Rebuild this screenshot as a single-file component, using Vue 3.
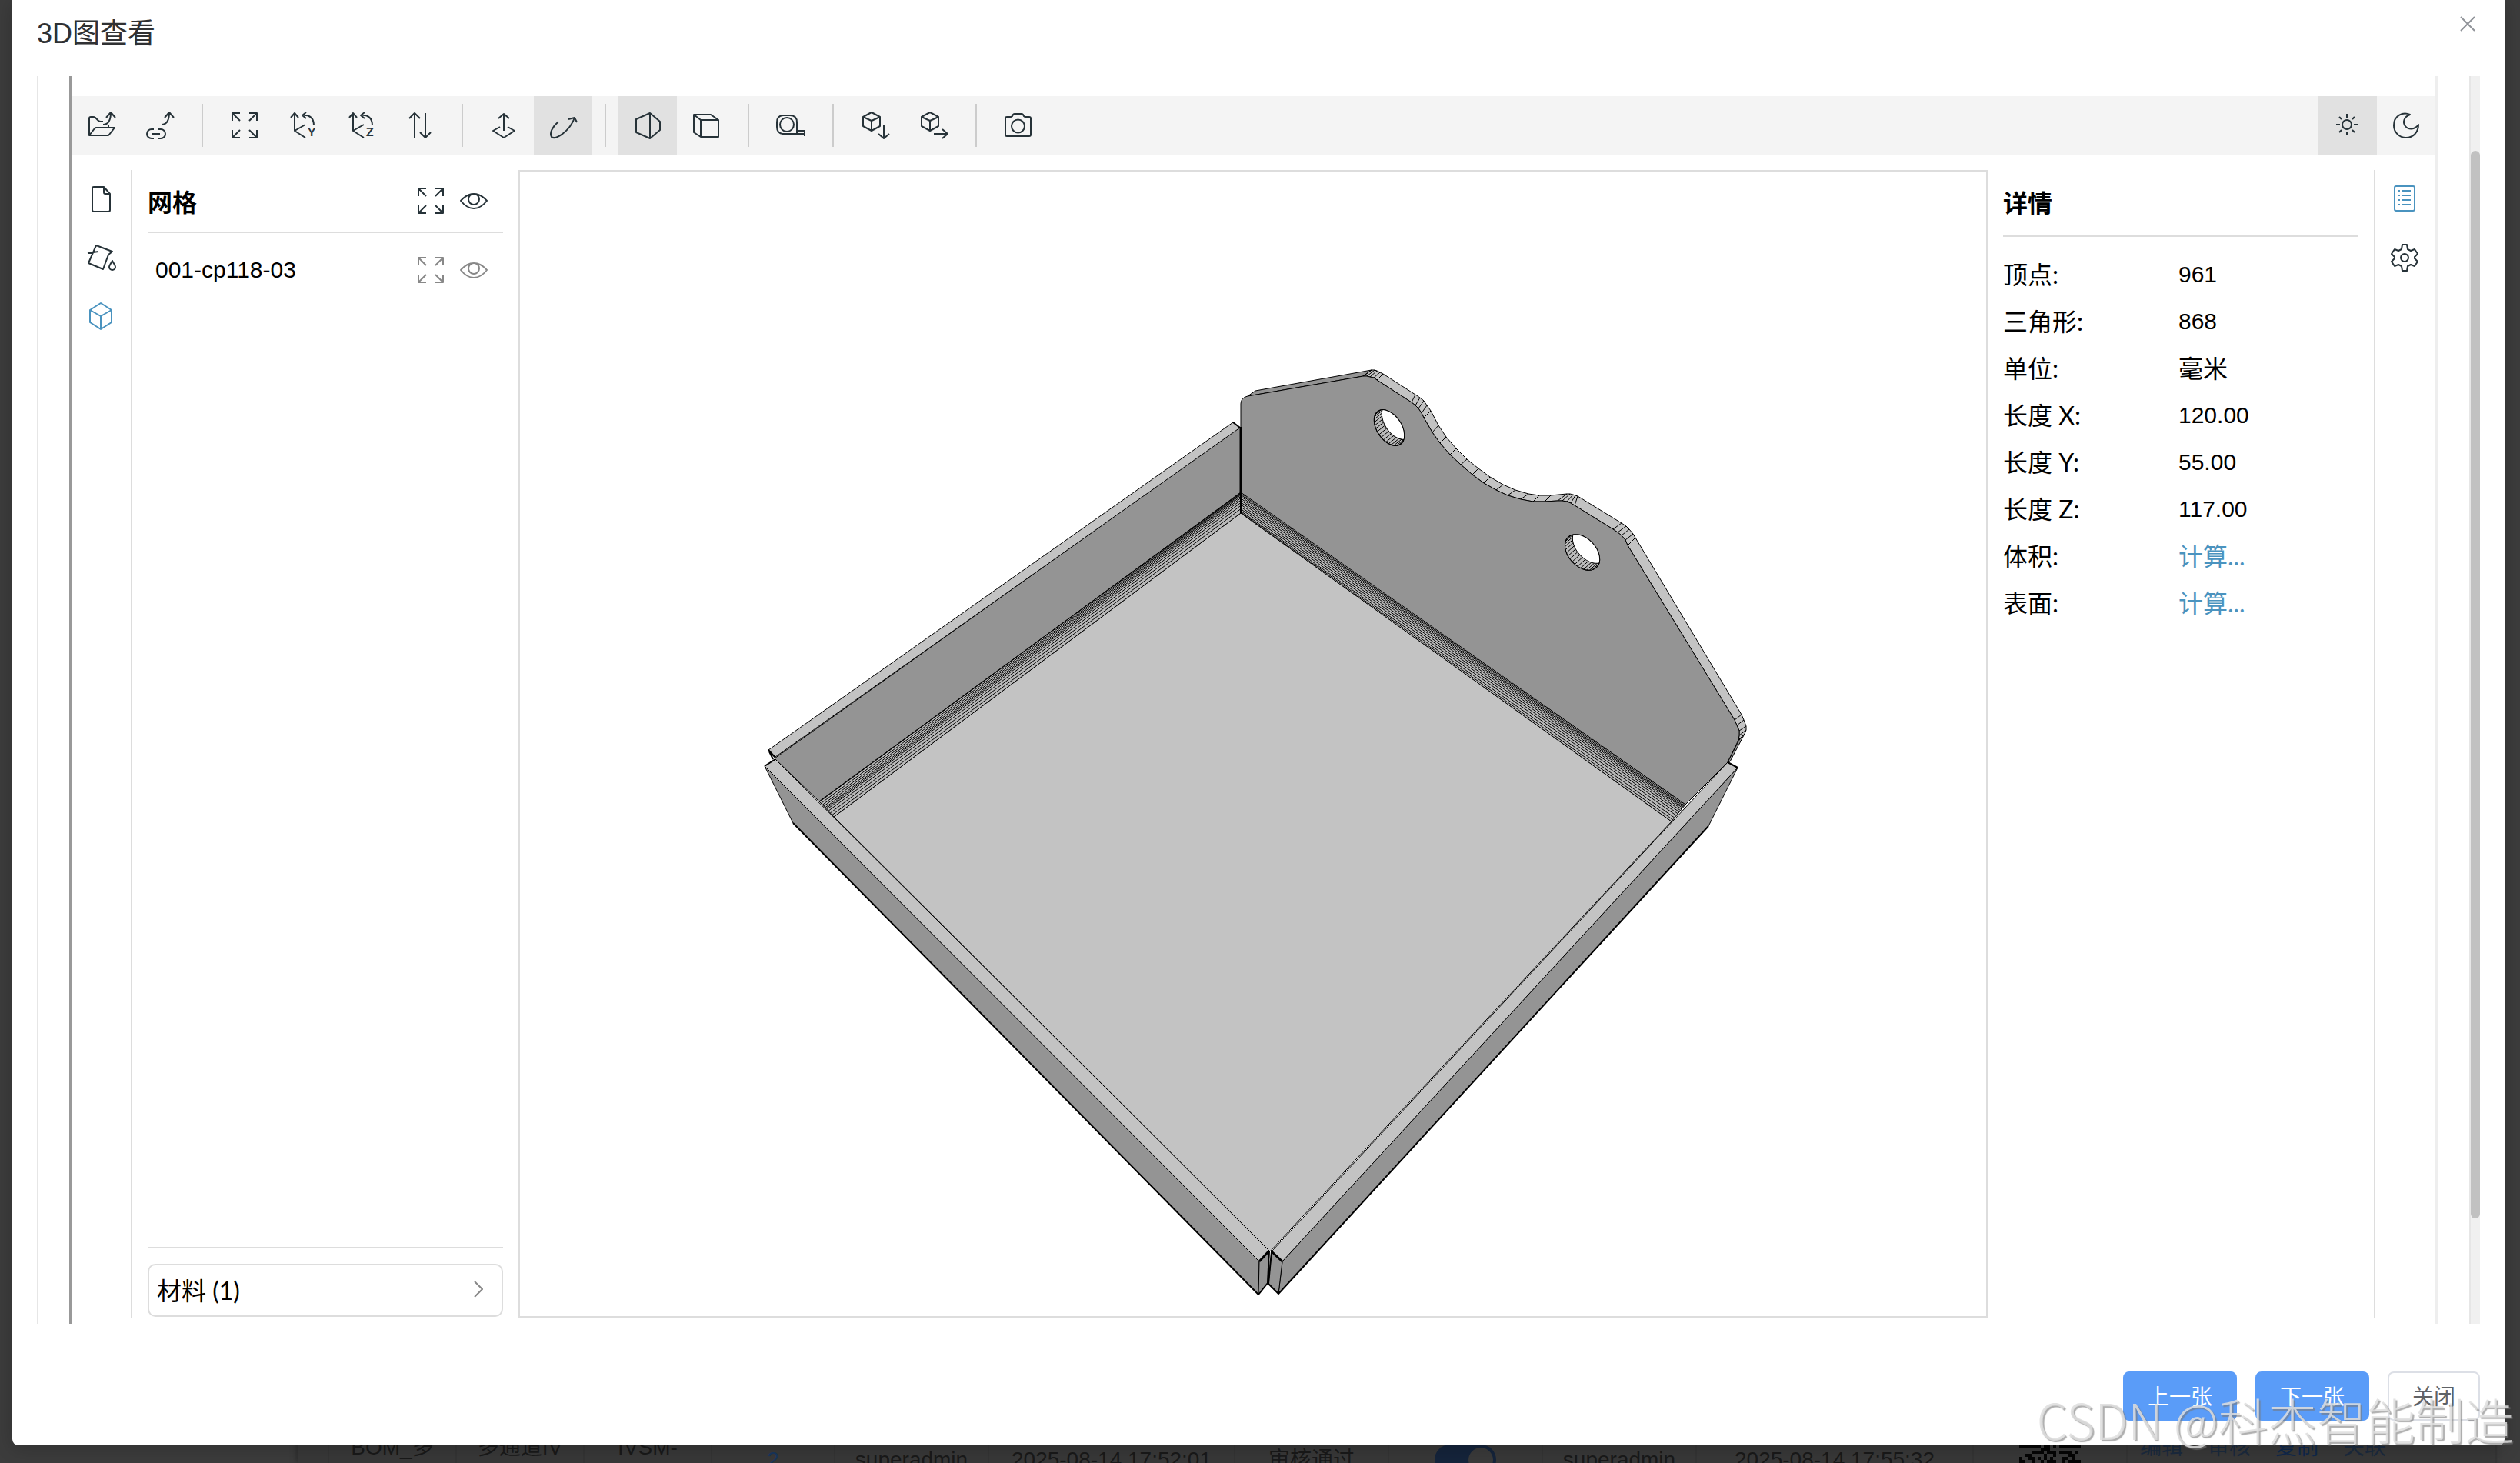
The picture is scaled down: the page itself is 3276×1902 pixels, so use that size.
<template>
  <div class="page">
    <!-- list page behind the dialog -->
    <div class="list-peek">
      <table class="list-table">
        <colgroup>
          <col v-for="(w, i) in listCols" :key="i" :width="w" />
          <col />
        </colgroup>
        <tbody>
          <tr>
            <td></td>
            <td>BOM_多</td>
            <td>多通道IV</td>
            <td>IVSM-</td>
            <td class="single blue">2</td>
            <td class="single">superadmin</td>
            <td class="single">2025-08-14 17:52:01</td>
            <td class="single">审核通过</td>
            <td class="switch-cell"><span class="switch"><span class="switch-knob"></span></span></td>
            <td class="single">superadmin</td>
            <td class="single">2025-08-14 17:55:32</td>
            <td>
              <svg class="qr" viewBox="0 0 20 6">
                <path :d="qrPath" />
              </svg>
            </td>
            <td class="actions">
              <a href="#">编辑</a>
              <a href="#">审核</a>
              <a href="#" class="strong">复制</a>
              <a href="#">关联</a>
            </td>
          </tr>
        </tbody>
      </table>
    </div>

    <div class="dialog" role="dialog" aria-labelledby="dialog-title">
      <header class="dialog-header">
        <h1 id="dialog-title">3D图查看</h1>
        <button type="button" class="close-btn" aria-label="关闭">
          <svg viewBox="0 0 20 20"><path d="M1 1l18 18M19 1L1 19" /></svg>
        </button>
      </header>

      <div class="dialog-body">
        <div class="viewer">
          <div class="toolbar">
            <template v-for="(tool, i) in tools" :key="i">
              <span v-if="tool === '|'" class="separator"></span>
              <span v-else-if="tool === '-'" class="spacer"></span>
              <button v-else type="button" class="tool" :class="{ selected: activeTools.includes(tool) }">
                <svg class="icon" viewBox="0 0 36 36">
                  <path :d="icons[tool]" />
                  <text v-if="tool === 'upY'" x="24" y="32">Y</text>
                  <text v-if="tool === 'upZ'" x="24" y="32">Z</text>
                </svg>
              </button>
            </template>
          </div>

          <div class="viewer-main">
            <nav class="side-tabs">
              <button
                v-for="tab in leftTabs"
                :key="tab"
                type="button"
                class="tool"
                :class="{ active: tab === 'meshes' }"
              >
                <svg class="icon" viewBox="0 0 36 36"><path :d="icons[tab]" /></svg>
              </button>
            </nav>

            <section class="panel mesh-panel">
              <div class="panel-title">
                <h2>网格</h2>
                <button type="button" class="mini"><svg class="icon" viewBox="0 0 36 36"><path :d="icons.fit" /></svg></button>
                <button type="button" class="mini"><svg class="icon" viewBox="0 0 36 36"><path :d="icons.eye" /></svg></button>
              </div>
              <div class="mesh-item">
                <span class="mesh-name">001-cp118-03</span>
                <button type="button" class="mini"><svg class="icon" viewBox="0 0 36 36"><path :d="icons.fit" /></svg></button>
                <button type="button" class="mini"><svg class="icon" viewBox="0 0 36 36"><path :d="icons.eye" /></svg></button>
              </div>
              <div class="material-area">
                <button type="button" class="material-btn">
                  <span>材料 (1)</span>
                  <svg viewBox="0 0 12 22"><path d="M1 1l10 10L1 21" /></svg>
                </button>
              </div>
            </section>

            <div class="canvas">
              <svg class="model" viewBox="676 223 1906 1488">
                <!-- floor -->
                <path class="light" d="M1613 667L2173 1068L1651 1627L1084 1062z" />
                <!-- back left wall -->
                <path class="dark" d="M1612 555V641L1065 1042L1007 986z" />
                <path class="light" d="M1603 549L1612 556L1008 984L999 975z" />
                <path class="bend" d="M1613 640V667L1084 1062L1065 1042z" />
                <path class="edge" :d="leftBend" />
                <path class="edge bold" d="M999 975L1008 985M1603 549L1612 556M1000 977L1005 987" />
                <!-- back plate -->
                <path class="light" :d="plateSide" />
                <path class="dark" d="M1622 515L1632 508L1783 481L1772 489z" />
                <path class="dark" :d="plateFace" />
                <path class="edge" :d="plateTicks" />
                <path class="dark" d="M2261 962L2268 954L2249 990L2246 991z" />
                <path class="bend" d="M1613 640V667L2173 1068L2191 1046z" />
                <path class="edge" :d="rightBend" />
                <path class="edge bold" d="M1613 555V667" />
                <g v-for="hole in holes" :key="hole.id">
                  <clipPath :id="hole.id">
                    <ellipse :rx="hole.rx" :ry="hole.ry" :transform="hole.place" />
                  </clipPath>
                  <ellipse class="rim" :rx="hole.rx" :ry="hole.ry" :transform="hole.place" />
                  <g :clip-path="`url(#${hole.id})`">
                    <path class="edge" :d="hole.ticks" />
                    <ellipse class="through" :rx="hole.rx" :ry="hole.ry" :transform="hole.back" />
                  </g>
                  <ellipse class="outline" :rx="hole.rx" :ry="hole.ry" :transform="hole.place" />
                </g>
                <!-- front left wall -->
                <path class="dark" d="M994 996L1031 1070L1636 1683L1637 1640z" />
                <path class="light" d="M994 996L1008 987L1650 1626L1637 1640z" />
                <path class="dark" d="M1637 1640L1650 1626L1648 1668L1636 1683z" />
                <!-- front right wall -->
                <path class="dark" d="M2259 998L2221 1074L1662 1682L1667 1640z" />
                <path class="light" d="M2246 991L2259 998L1667 1640L1653 1627z" />
                <path class="dark" d="M1653 1627L1667 1640L1662 1682L1649 1669z" />
                <path class="edge bold" d="M994 996L1008 987M2246 991L2259 998M1031 1070L1636 1683L1648 1668L1650 1626M2221 1074L1662 1682L1649 1669L1653 1627" />
                <path class="edge heavy" d="M1637 1640L1650 1626M1653 1627L1667 1640" />
              </svg>
            </div>

            <section class="panel detail-panel">
              <div class="panel-title tall">
                <h2>详情</h2>
              </div>
              <table class="details">
                <tbody>
                  <tr v-for="row in details" :key="row.label">
                    <th scope="row">{{ row.label }}</th>
                    <td :class="{ number: row.number }">
                      <a v-if="row.link" href="#">{{ row.value }}</a>
                      <template v-else>{{ row.value }}</template>
                    </td>
                  </tr>
                </tbody>
              </table>
            </section>

            <nav class="side-tabs right">
              <button type="button" class="tool active"><svg class="icon" viewBox="0 0 36 36"><path :d="icons.details" /></svg></button>
              <button type="button" class="tool"><svg class="icon" viewBox="0 0 36 36"><path :d="icons.settings" /></svg></button>
            </nav>
          </div>
        </div>
        <div class="scrollbar"><div class="thumb"></div></div>
      </div>

      <footer class="dialog-footer">
        <button type="button" class="btn primary">上一张</button>
        <button type="button" class="btn primary">下一张</button>
        <button type="button" class="btn">关闭</button>
      </footer>
    </div>

    <div class="watermark">CSDN @科杰智能制造</div>
  </div>
</template>

<script setup>
const listCols = [40, 166, 166, 166, 160, 200, 320, 200, 200, 200, 360, 200];

const tools = [
  'open', 'link', '|', 'fit', 'upY', 'upZ', 'flip', '|', 'fixedUp', 'orbit', '|',
  'perspective', 'ortho', '|', 'measure', '|', 'download', 'share', '|', 'camera', '-', 'sun', 'moon',
];
const activeTools = ['orbit', 'perspective', 'sun'];
const leftTabs = ['file', 'materials', 'meshes'];

const axis = 'M7 25V2M2 8l5-6 5 6M21 17L7 25l14 9M17 5c9-1 15 3 15 13M22 1l-5 4 5 4';
const smallCube = 'M13 1L2 7v12l11 6 11-6V7zM2 7l11 5 11-5M13 12v13';

const icons = {
  open: 'M2 31V9q0-2 2-2h3q2 0 3 1l4 4q1 1 3 1h3M2 31l7-9q1-1 2-1h24l-7 9q-1 1-2 1zM27 21v-3M20 17c7 0 10-6 10-16M24 8l6-7 6 7',
  link: 'M20 17c7 0 10-6 10-16M24 8l6-7 6 7M10 23H7a6 6 0 0 0 0 12h3M16 23h3a6 6 0 0 1 0 12h-3M8 29h10',
  fit: 'M2 12V2h10M2 2l10 10M24 2h10v10M34 2L24 12M2 24v10h10M2 34l10-10M24 34h10V24M34 34L24 24',
  upY: axis,
  upZ: axis,
  flip: 'M11 34V2M4 9l7-7 7 7M25 2v32M18 27l7 7 7-7',
  fixedUp: 'M17 25V3M10 9l7-6 7 6M12 20l-9 5 14 9 14-9-9-5',
  orbit: 'M12 13C4 20 0 28 3 33c5 5 24-8 30-25M25 10l8-2 3 6',
  perspective: 'M3 10l18-8 13 11v11L21 35 3 27zM21 2v33',
  ortho: 'M11 11h23v22H11zM11 11L2 4v23l9 6M2 4h22l10 7',
  measure: 'M26 29H9q-9 0-9-9v-6q0-9 9-9h8q9 0 9 9v11h10v7M26 25v4h10M4 17a9 9 0 1 0 18 0a9 9 0 1 0-18 0',
  download: smallCube + 'M29 18v17M22 29l7 6 7-6',
  share: smallCube + 'M18 29h18M29 23l7 6-7 6',
  camera: 'M3 7h5q1 0 2-1l1-2q1-1 2-1h9q1 0 2 1l1 2q1 1 2 1h5q2 0 2 2v21q0 2-2 2H3q-2 0-2-2V9q0-2 2-2zM9 19a8 8 0 1 0 17 0a8 8 0 1 0-17 0',
  sun: 'M11 17a6 6 0 1 0 12 0a6 6 0 1 0-12 0M17 3v5M17 26v5M3 17h5M26 17h5M7 7l3 3M24 24l3 3M7 27l3-3M24 10l3-3',
  moon: 'M23 4C14 0 2 5 2 18c0 9 7 16 16 16s16-7 16-17c-5 7-13 7-17 2S15 7 23 4z',
  file: 'M8 2h13l8 9v21q0 2-2 2H8q-2 0-2-2V4q0-2 2-2zM21 2v7q0 2 2 2h6',
  materials: 'M11 2l21 8-5 4-7 19-19-8zM0 12l14-2M32 22c2 4 4 6 4 8a4 4 0 0 1-8 0c0-2 2-4 4-8z',
  meshes: 'M17 1L3 10v16l14 9 14-9V10zM3 10l14 8 14-8M17 18v17',
  eye: 'M1 18q8-9 17-9t17 9q-8 10-17 10T1 18zM11 16a7 7 0 1 0 14 0a7 7 0 1 0-14 0',
  details: 'M7 1h22q2 0 2 2v28q0 2-2 2H7q-2 0-2-2V3q0-2 2-2zM10 7h2M15 7h11M10 13h2M15 13h11M10 19h2M15 19h11M10 25h2M15 25h11',
  settings: 'M15 1h6l1 6 4 2 5-2 4 6-4 4v2l4 4-4 6-5-2-4 2-1 6h-6l-1-6-4-2-5 2-4-6 4-4v-2l-4-4 4-6 5 2 4-2zM13 18a5 5 0 1 0 10 0a5 5 0 1 0-10 0',
};

const details = [
  { label: '顶点:', value: '961', number: true },
  { label: '三角形:', value: '868', number: true },
  { label: '单位:', value: '毫米' },
  { label: '长度 X:', value: '120.00', number: true },
  { label: '长度 Y:', value: '55.00', number: true },
  { label: '长度 Z:', value: '117.00', number: true },
  { label: '体积:', value: '计算...', link: true },
  { label: '表面:', value: '计算...', link: true },
];

// contour of the back plate: front edge and the matching points on the rear edge
const front = [
  [1772, 489], [1777, 489], [1781, 490], [1786, 491], [1790, 494], [1835, 523], [1840, 527], [1844, 531],
  [1848, 537], [1851, 543], [1862, 562], [1872, 576], [1885, 591], [1899, 604], [1914, 617], [1929, 628],
  [1945, 637], [1960, 644], [1977, 649], [1993, 652], [2008, 652], [2025, 651], [2031, 651], [2037, 652],
  [2042, 654], [2047, 657], [2097, 688], [2103, 692], [2108, 696], [2113, 702], [2116, 709],
  [2255, 936], [2258, 943], [2261, 950], [2261, 956], [2260, 962],
];
const rear = [
  [1783, 481], [1787, 481], [1790, 482], [1794, 484], [1798, 486], [1840, 513], [1846, 517], [1851, 521],
  [1855, 527], [1860, 534], [1870, 553], [1880, 568], [1893, 583], [1907, 597], [1922, 609], [1937, 620],
  [1954, 630], [1970, 637], [1987, 642], [2001, 644], [2016, 644], [2037, 642], [2041, 642], [2045, 643],
  [2048, 644], [2051, 645], [2108, 680], [2114, 684], [2118, 688], [2123, 694], [2126, 699],
  [2264, 929], [2267, 936], [2270, 944], [2270, 949], [2268, 954],
];
const join = (pts) => pts.map((p) => p.join(' ')).join('L');
const plateSide = `M${join(front)}L${join([...rear].reverse())}z`;
const plateFace = `M1613 641V525Q1613 517 1622 515L${join(front)}L2246 991L2191 1046z`;
const plateTicks = front.map((p, i) => `M${p.join(' ')}L${rear[i].join(' ')}`).join('');

// bend lines fan out between two edges of a fold
function fan(a0, a1, b0, b1, from, to) {
  return from
    .map((t, i) => {
      const s = to[i];
      const x0 = a0[0] + (a1[0] - a0[0]) * t;
      const y0 = a0[1] + (a1[1] - a0[1]) * t;
      const x1 = b0[0] + (b1[0] - b0[0]) * s;
      const y1 = b0[1] + (b1[1] - b0[1]) * s;
      return `M${x0} ${y0}L${x1} ${y1}`;
    })
    .join('');
}
const leftBend = fan(
  [1613, 640], [1613, 667], [1065, 1042], [1084, 1062],
  [0.02, 0.05, 0.09, 0.14, 0.2, 0.28, 0.38, 0.5, 0.64, 0.8],
  [0.02, 0.12, 0.22, 0.31, 0.4, 0.46, 0.52, 0.62, 0.75, 0.88]
);
const rightBend = fan(
  [1613, 640], [1613, 667], [2191, 1046], [2173, 1068],
  [0.06, 0.12, 0.2, 0.29, 0.38, 0.48, 0.59, 0.7, 0.8, 0.9, 0.96],
  [0.05, 0.1, 0.15, 0.2, 0.27, 0.35, 0.44, 0.54, 0.65, 0.78, 0.9]
);

function makeHole(id, cx, cy, rx, ry, angle, dx, dy) {
  const rad = (angle * Math.PI) / 180;
  let ticks = '';
  for (let k = 0; k < 36; k++) {
    const a = (k * Math.PI) / 18;
    const x = cx + rx * Math.cos(a) * Math.cos(rad) - ry * Math.sin(a) * Math.sin(rad);
    const y = cy + rx * Math.cos(a) * Math.sin(rad) + ry * Math.sin(a) * Math.cos(rad);
    ticks += `M${x} ${y}l${dx} ${dy}`;
  }
  return {
    id, rx, ry, ticks,
    place: `translate(${cx} ${cy}) rotate(${angle})`,
    back: `translate(${cx + dx} ${cy + dy}) rotate(${angle})`,
  };
}
const holes = [
  makeHole('hole-a', 1806, 556, 26, 16, 56, 10, -8),
  makeHole('hole-b', 2057, 718, 27, 18, 47, 10, -9),
];

const qrRows = [
  '11111110110101111111',
  '00000001110000000000',
  '00001111011101111010',
  '00110000100100001100',
  '10011010101000110100',
  '11001001011100101111',
];
const qrPath = qrRows
  .map((row, y) => [...row].map((c, x) => (c === '1' ? `M${x} ${y}h1v1h-1z` : '')).join(''))
  .join('');
</script>

<style>
body {
  margin: 0;
  background: #3c3c3c;
}
</style>

<style scoped>
.page {
  position: relative;
  height: 100vh;
  overflow: hidden;
  display: flex;
  flex-direction: column;
  justify-content: flex-end;
  background: #3c3c3c;
  font-family: "Liberation Sans", "Noto Sans CJK SC", sans-serif;
}

button {
  font: inherit;
  border: 0;
  padding: 0;
  background: none;
  cursor: pointer;
}

a {
  text-decoration: none;
}

/* list behind the dialog */
.list-peek {
  height: 40px;
  margin: 0 30px 0 387px;
  overflow: hidden;
  background: #383838;
  box-shadow: -2px 0 6px #2c2c2c;
}

.list-table {
  width: 100%;
  table-layout: fixed;
  border-collapse: collapse;
  font-size: 28px;
  line-height: 40px;
  color: #191919;
}

.list-table td {
  padding: 0;
  box-sizing: border-box;
  border-right: 2px solid #343434;
  text-align: center;
  vertical-align: top;
  white-space: nowrap;
}

.list-table td.single {
  padding-top: 16px;
}

.list-table td.blue {
  color: #19365c;
}

.list-table td.switch-cell {
  padding-top: 16px;
}

.switch {
  display: flex;
  justify-content: flex-end;
  width: 80px;
  height: 40px;
  margin: 0 auto;
  padding: 4px;
  box-sizing: border-box;
  border-radius: 20px;
  background: #15243b;
}

.switch-knob {
  width: 32px;
  height: 32px;
  border-radius: 50%;
  background: #3a3a3a;
}

.qr {
  display: block;
  width: 80px;
  height: 24px;
  margin: 16px auto 0;
  fill: #050505;
}

.list-table td.actions {
  text-align: left;
  padding-left: 16px;
}

.actions a {
  margin-right: 32px;
  color: #1b2a3e;
}

.actions a.strong {
  color: #10284b;
}

/* dialog */
.dialog {
  position: absolute;
  inset: 0 20px 23px 16px;
  display: flex;
  flex-direction: column;
  background: #fff;
  border-radius: 0 0 8px 8px;
  box-shadow: 0 4px 24px rgba(0, 0, 0, 0.2);
}

.dialog-header {
  flex: none;
  display: flex;
  justify-content: space-between;
  height: 99px;
  padding: 0 38px 0 32px;
  box-sizing: border-box;
}

.dialog-header h1 {
  margin: 0;
  font-size: 36px;
  font-weight: 400;
  line-height: 88px;
  color: #303133;
}

.close-btn {
  height: 62px;
}

.close-btn svg {
  display: block;
  width: 20px;
  height: 20px;
  fill: none;
  stroke: #909399;
  stroke-width: 2;
}

.dialog-body {
  flex: 1;
  min-height: 0;
  display: flex;
  margin: 0 32px;
  padding-left: 40px;
  border-left: 2px solid #e6e6e6;
}

.viewer {
  flex: 1;
  min-width: 0;
  display: flex;
  flex-direction: column;
  gap: 20px;
  padding: 26px 0 8px;
  border-left: 4px solid #999;
  border-right: 4px solid #eee;
  font-family: Lato, "Noto Sans CJK SC", sans-serif;
  font-size: 32px;
  color: #000;
}

.scrollbar {
  width: 12px;
  margin-left: 40px;
  border-left: 2px solid #e6e6e6;
  padding-top: 97px;
  background: #f0f0f0;
}

.thumb {
  height: 91%;
  border-radius: 6px;
  background: #c1c1c1;
}

.toolbar {
  display: flex;
  height: 76px;
  background: #f4f4f4;
}

.tool {
  display: flex;
  align-items: center;
  justify-content: center;
  width: 76px;
  height: 76px;
  color: #263238;
}

.tool.selected {
  background: #e1e1e1;
}

.tool.active {
  color: #4a93bf;
}

.icon {
  display: block;
  width: 36px;
  height: 36px;
  overflow: visible;
  fill: none;
  stroke: currentColor;
  stroke-width: 2;
  stroke-linejoin: round;
}

.icon text {
  font-size: 16px;
  font-weight: 700;
  fill: currentColor;
  stroke: none;
}

.separator {
  width: 2px;
  margin: 10px 16px;
  background: #ccc;
}

.spacer {
  flex: 1;
}

.viewer-main {
  flex: 1;
  min-height: 0;
  display: flex;
}

.side-tabs {
  width: 76px;
  border-right: 2px solid #ddd;
}

.side-tabs.right {
  border-right: 0;
  border-left: 2px solid #ddd;
}

.side-tabs.right {
  width: 78px;
}

.panel {
  width: 462px;
  padding: 0 20px;
}

.mesh-panel {
  display: flex;
  flex-direction: column;
}

.panel-title {
  display: flex;
  align-items: center;
  gap: 20px;
  height: 80px;
  padding-right: 20px;
  border-bottom: 2px solid #ddd;
}

.panel-title.tall {
  height: 81px;
  padding-bottom: 4px;
}

.panel-title h2 {
  flex: 1;
  margin: 0;
  font-size: 32px;
  font-weight: 700;
}

.mini {
  color: #263238;
}

.mesh-item {
  display: flex;
  align-items: center;
  gap: 20px;
  height: 56px;
  margin-top: 20px;
  padding: 0 20px 0 10px;
}

.mesh-name {
  flex: 1;
  font-family: "Liberation Sans", sans-serif;
  font-size: 30px;
}

.mesh-item .mini {
  color: #888;
}

.material-area {
  margin-top: auto;
  padding: 20px 0 1px;
  border-top: 2px solid #ddd;
}

.material-btn {
  display: flex;
  align-items: center;
  justify-content: space-between;
  width: 100%;
  height: 69px;
  padding: 0 24px 4px 10px;
  border: 2px solid #ddd;
  border-radius: 10px;
  color: #000;
}

.material-btn svg {
  width: 12px;
  height: 22px;
  fill: none;
  stroke: #888;
  stroke-width: 2;
}

.canvas {
  flex: 1;
  min-width: 0;
  border: 2px solid #ddd;
}

.model {
  display: block;
  width: 100%;
  height: 100%;
  stroke: #000;
  stroke-width: 1;
  stroke-linejoin: round;
}

.light {
  fill: #c3c3c3;
}

.dark {
  fill: #949494;
}

.bend {
  fill: #b8b8b8;
}

.edge,
.outline {
  fill: none;
}

.bold {
  stroke-width: 2;
}

.heavy {
  stroke-width: 3;
}

.rim {
  fill: #bbb;
}

.through {
  fill: #fff;
}

.details {
  width: 100%;
  margin-top: 18px;
  border-collapse: collapse;
}

.details th,
.details td {
  height: 61px;
  padding: 0;
  text-align: left;
  line-height: 40px;
}

.details th {
  width: 228px;
  font-weight: 400;
}

.details td.number {
  font-family: "Liberation Sans", sans-serif;
  font-size: 30px;
}

.details a {
  color: #4a93bf;
}

.dialog-footer {
  flex: none;
  display: flex;
  justify-content: flex-end;
  gap: 24px;
  padding: 62px 32px 32px;
}

.btn {
  width: 120px;
  height: 64px;
  padding-bottom: 2px;
  border: 2px solid #dcdfe6;
  border-radius: 8px;
  background: #fff;
  font-size: 28px;
  color: #606266;
}

.btn.primary {
  width: 148px;
  border-color: #5a9cf8;
  background: #5a9cf8;
  color: #fff;
}

.watermark {
  position: absolute;
  right: 8px;
  bottom: 26px;
  font-family: "Noto Sans CJK SC", sans-serif;
  font-size: 64px;
  font-weight: 300;
  line-height: 64px;
  color: rgba(222, 222, 222, 0.85);
  text-shadow: 2px 2px 1px rgba(120, 120, 120, 0.6);
  pointer-events: none;
}
</style>
